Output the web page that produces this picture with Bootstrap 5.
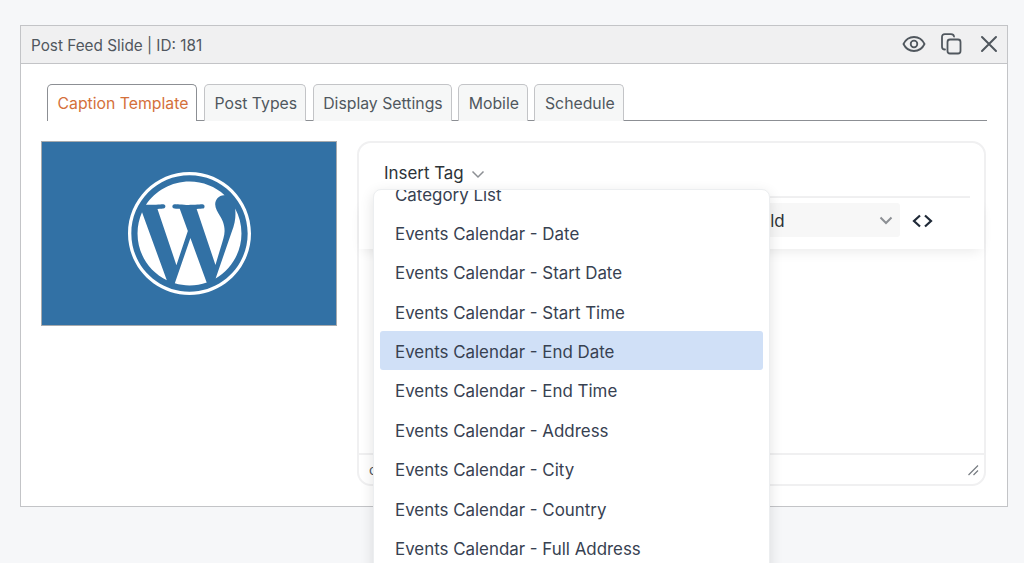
<!DOCTYPE html>
<html lang="en">
<head>
<meta charset="utf-8">
<title>Post Feed Slide</title>
<link rel="stylesheet" href="https://cdn.jsdelivr.net/npm/bootstrap@5.3.0/dist/css/bootstrap.min.css">
<style>
html,body{height:563px;overflow:hidden}
body{background:#f6f7f9;font-family:Inter,"Liberation Sans",sans-serif;color:#3c434a;padding:25px 16px 0 20px}
.slide-panel{height:482px;background:#fff;border:1px solid #c3c4c7}
.slide-head{height:38px;background:#f0f0f1;border-bottom:1px solid #c3c4c7;padding:0 7px 0 10px;font-size:15.3px;color:#50575e}
.head-title{padding-top:3px}
.head-icons{gap:13px;margin-bottom:1px}
.head-icon{color:#50575e;display:block}
.x-icon{margin-left:2px}
.slide-body{padding:20px 20px 0 20px}
.tab-strip{margin:0 0 20px 6px;height:37px;border-bottom:1px solid #8c8f94;gap:6.5px;flex-wrap:nowrap}
.tab-strip .nav-link{height:37px;padding:1px 8px 0 9.5px;background:#f6f7f7;border:1px solid #c3c4c7;border-bottom:0;border-radius:5px 5px 0 0;font-size:15.8px;line-height:36px;color:#50575e;margin:0}
.tab-strip .nav-link.active{background:#fff;color:#d4703a;border:1px solid #8c8f94;border-bottom:0;height:37px}
.content-row{gap:20px}
.thumb{width:296px;height:185px;background:#3271a5;border:1px solid #a7aaad;flex:none}
.editor-box{position:relative;width:629px;height:345px;border:2px solid #f0f0f1;border-radius:14px;background:#fff;display:flex;flex-direction:column}
.insert-row{height:55px;margin:0 14px;border-bottom:2px solid #f0f0f1;font-size:16.9px;color:#2c3338;padding:8px 0 0 11px;gap:6px}
.tool-row{height:51px;padding:5px 51px 0 0;gap:12px;justify-content:flex-end;box-shadow:0 6px 12px -4px rgba(0,0,0,.09);position:relative}
.fake-select{width:160px;height:34px;background:#f7f7f7;border-radius:3px;font-size:16.9px;padding:0 6px 0 9px;color:#2c3338}
.select-text{padding-top:4px}
.code-glyph{margin-top:11px}
.edit-area{flex:1;background:#fff}
.status-row{height:31px;border-top:2px solid #f0f0f1;padding:0 5px 0 10px;font-size:14px;color:#50575e}
.tag-menu{position:absolute;display:block;top:46px;left:14px;width:397px;height:420px;margin:0;padding:0 6px;overflow:hidden;border:1px solid #eceef0;border-radius:8px;box-shadow:0 4px 14px rgba(0,0,0,.12);background:#fff}
.tag-menu .dropdown-item{height:39.4px;line-height:42px;padding:0 15px;font-size:16.9px;color:#374151;border-radius:3px}
.tag-menu .dropdown-item.is-hover{background:#d0e0f7;color:#374151}
.tag-scroll{margin-top:-16.5px}
</style>
</head>
<body>
<div class="slide-panel">
  <div class="slide-head d-flex align-items-center justify-content-between">
    <span class="head-title">Post Feed Slide | ID: 181</span>
    <div class="head-icons d-flex align-items-center">
      <svg class="head-icon" width="24" height="24" viewBox="0 0 24 24" fill="none" stroke="currentColor" stroke-width="1.8"><path d="M1.500 12C3.600 7.600 7.400 5 12 5s8.400 2.600 10.500 7c-2.100 4.400-5.900 7-10.500 7S3.600 16.400 1.500 12z"/><circle cx="12" cy="12" r="3.300"/></svg>
      <svg class="head-icon" width="24" height="24" viewBox="0 0 24 24" fill="none" stroke="currentColor" stroke-width="1.800" stroke-linecap="round"><path d="M6 17.500c-2 0-3-1-3-2.800V5c0-1.800 1-2.800 2.800-2.800H12c1.800 0 2.800.8 3 2.300"/><rect x="8.500" y="7.500" width="13" height="14" rx="2.500"/></svg>
      <svg class="head-icon x-icon" width="22" height="22" viewBox="0 0 22 22" fill="none" stroke="currentColor" stroke-width="2" stroke-linecap="round"><path d="M4 4l14 14M18 4L4 18"/></svg>
    </div>
  </div>
  <div class="slide-body">
    <ul class="nav tab-strip">
      <li class="nav-item"><a class="nav-link active" href="#">Caption Template</a></li>
      <li class="nav-item"><a class="nav-link" href="#">Post Types</a></li>
      <li class="nav-item"><a class="nav-link" href="#">Display Settings</a></li>
      <li class="nav-item"><a class="nav-link" href="#">Mobile</a></li>
      <li class="nav-item"><a class="nav-link" href="#">Schedule</a></li>
    </ul>
    <div class="d-flex content-row">
      <div class="thumb d-flex align-items-center justify-content-center">
        <svg width="123" height="123" viewBox="0 0 24 24" fill="#fff" fill-rule="evenodd">
          <g transform="translate(12 12) scale(.94) translate(-12 -12)"><path d="M21.469 6.825c.84 1.537 1.318 3.3 1.318 5.175 0 3.979-2.156 7.456-5.363 9.325l3.295-9.527c.615-1.54.82-2.771.82-3.864 0-.405-.026-.78-.07-1.11m-7.981.105c.647-.03 1.232-.105 1.232-.105.582-.075.514-.93-.067-.899 0 0-1.755.135-2.88.135-1.064 0-2.85-.15-2.85-.15-.585-.03-.661.855-.075.885 0 0 .54.061 1.125.09l1.68 4.605-2.37 7.08L5.354 6.9c.649-.03 1.234-.1 1.234-.1.585-.075.516-.93-.065-.896 0 0-1.746.138-2.874.138-.2 0-.438-.008-.69-.015C4.911 3.150 8.235 1.215 12 1.215c2.809 0 5.365 1.072 7.286 2.833-.046-.003-.091-.009-.141-.009-1.060 0-1.812.923-1.812 1.914 0 .89.513 1.643 1.060 2.531.411.72.89 1.643.89 2.977 0 .915-.354 1.994-.821 3.479l-1.075 3.585-3.9-11.610.001.014zM12 22.784c-1.059 0-2.081-.153-3.048-.437l3.237-9.406 3.315 9.087c.024.053.05.101.078.149-1.120.393-2.325.609-3.582.609M1.211 12c0-1.564.336-3.050.935-4.390L7.290 21.709C3.694 19.960 1.212 16.271 1.211 12"/></g>
          <path d="M12 0C5.385 0 0 5.385 0 12s5.385 12 12 12 12-5.385 12-12S18.615 0 12 0m0 23.350C5.730 23.350.650 18.270.650 12S5.730.650 12 .650 23.350 5.730 23.350 12 18.270 23.350 12 23.350"/>
        </svg>
      </div>
      <div class="editor-box">
        <div class="insert-row d-flex align-items-center">
          <span>Insert Tag</span>
          <svg width="16" height="16" viewBox="0 0 16 16" fill="none" stroke="#8c8f94" stroke-width="1.500"><path d="M2.500 5.500L8 11l5.500-5.500"/></svg>
        </div>
        <div class="tool-row d-flex">
          <div class="fake-select d-flex align-items-center justify-content-between">
            <span class="select-text">Bold</span>
            <svg width="16" height="16" viewBox="0 0 16 16" fill="none" stroke="#8c8f94" stroke-width="2"><path d="M2.500 5.500L8 11l5.500-5.500"/></svg>
          </div>
          <svg class="code-glyph" width="21" height="14" viewBox="0 0 21 14" fill="none" stroke="#1f2937" stroke-width="2.200"><path d="M8 1.500L2 7l6 5.500M13 1.500L19 7l-6 5.500"/></svg>
        </div>
        <div class="edit-area"></div>
        <div class="status-row d-flex align-items-center justify-content-between">
          <span>c</span>
          <svg width="12" height="12" viewBox="0 0 12 12" fill="none" stroke="#787c82" stroke-width="1.200"><path d="M1.500 11L11 1.500M6.500 11L11 6.500"/></svg>
        </div>
        <div class="dropdown-menu tag-menu">
          <div class="tag-scroll">
            <a class="dropdown-item" href="#">Category List</a>
            <a class="dropdown-item" href="#">Events Calendar - Date</a>
            <a class="dropdown-item" href="#">Events Calendar - Start Date</a>
            <a class="dropdown-item" href="#">Events Calendar - Start Time</a>
            <a class="dropdown-item is-hover" href="#">Events Calendar - End Date</a>
            <a class="dropdown-item" href="#">Events Calendar - End Time</a>
            <a class="dropdown-item" href="#">Events Calendar - Address</a>
            <a class="dropdown-item" href="#">Events Calendar - City</a>
            <a class="dropdown-item" href="#">Events Calendar - Country</a>
            <a class="dropdown-item" href="#">Events Calendar - Full Address</a>
          </div>
        </div>
      </div>
    </div>
  </div>
</div>
</body>
</html>
